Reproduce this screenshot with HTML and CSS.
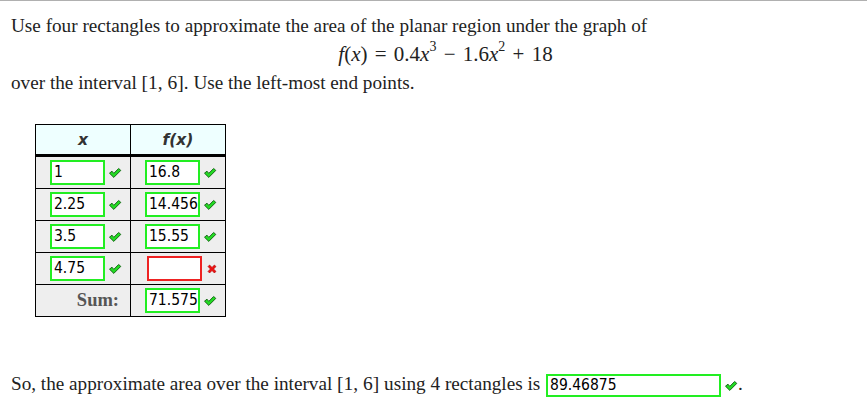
FILE: index.html
```html
<!DOCTYPE html>
<html>
<head>
<meta charset="utf-8">
<link rel="stylesheet" href="styles.css">
</head>
<body>
<div class="page">
  <p class="line first">Use four rectangles to approximate the area of the planar region under the graph of</p>
  <div class="formula"><span class="mi">f</span>(<span class="mi">x</span>) <span class="op">=</span> 0.4<span class="mi">x</span><sup>3</sup> <span class="op">−</span> 1.6<span class="mi">x</span><sup>2</sup> <span class="op">+</span> 18</div>
  <p class="line">over the interval <span class="m">[1, 6]</span>. Use the left-most end points.</p>

  <table class="grid">
    <thead>
      <tr><th>x</th><th>f(x)</th></tr>
    </thead>
    <tbody>
      <tr>
        <td><span class="field ok">1</span><svg class="mark" viewBox="0 0 14 12"><path class="chk" d="M1.5 6.2 L4 4.2 L5.8 6.4 L10.6 1.5 L12.8 3.4 L5.8 10.4 Z"/></svg></td>
        <td><span class="field ok">16.8</span><svg class="mark" viewBox="0 0 14 12"><path class="chk" d="M1.5 6.2 L4 4.2 L5.8 6.4 L10.6 1.5 L12.8 3.4 L5.8 10.4 Z"/></svg></td>
      </tr>
      <tr>
        <td><span class="field ok">2.25</span><svg class="mark" viewBox="0 0 14 12"><path class="chk" d="M1.5 6.2 L4 4.2 L5.8 6.4 L10.6 1.5 L12.8 3.4 L5.8 10.4 Z"/></svg></td>
        <td><span class="field ok">14.456</span><svg class="mark" viewBox="0 0 14 12"><path class="chk" d="M1.5 6.2 L4 4.2 L5.8 6.4 L10.6 1.5 L12.8 3.4 L5.8 10.4 Z"/></svg></td>
      </tr>
      <tr>
        <td><span class="field ok">3.5</span><svg class="mark" viewBox="0 0 14 12"><path class="chk" d="M1.5 6.2 L4 4.2 L5.8 6.4 L10.6 1.5 L12.8 3.4 L5.8 10.4 Z"/></svg></td>
        <td><span class="field ok">15.55</span><svg class="mark" viewBox="0 0 14 12"><path class="chk" d="M1.5 6.2 L4 4.2 L5.8 6.4 L10.6 1.5 L12.8 3.4 L5.8 10.4 Z"/></svg></td>
      </tr>
      <tr>
        <td><span class="field ok">4.75</span><svg class="mark" viewBox="0 0 14 12"><path class="chk" d="M1.5 6.2 L4 4.2 L5.8 6.4 L10.6 1.5 L12.8 3.4 L5.8 10.4 Z"/></svg></td>
        <td><span class="field bad"></span><svg class="mark cross" viewBox="0 0 14 12"><path class="x" d="M3 3.6 L4.6 2 L7 4.4 L9.4 2 L11 3.6 L8.6 6 L11 8.4 L9.4 10 L7 7.6 L4.6 10 L3 8.4 L5.4 6 Z"/></svg></td>
      </tr>
      <tr>
        <td class="sum">Sum:</td>
        <td><span class="field ok">71.575</span><svg class="mark" viewBox="0 0 14 12"><path class="chk" d="M1.5 6.2 L4 4.2 L5.8 6.4 L10.6 1.5 L12.8 3.4 L5.8 10.4 Z"/></svg></td>
      </tr>
    </tbody>
  </table>

  <p class="line answer">So, the approximate area over the interval <span class="m">[1, 6]</span> using 4 rectangles is <span class="field ok wide">89.46875</span><svg class="mark" viewBox="0 0 14 12"><path class="chk" d="M1.5 6.2 L4 4.2 L5.8 6.4 L10.6 1.5 L12.8 3.4 L5.8 10.4 Z"/></svg>.</p>
</div>
</body>
</html>
```
FILE: styles.css
```css
html, body {
  margin: 0;
  padding: 0;
  background: #fff;
}
body {
  border-top: 1px solid #b0b0b0;
  font-family: "Liberation Serif", "Times New Roman", serif;
  color: #222;
}
.page {
  padding: 0 11px;
}
.line {
  margin: 0;
  font-size: 19.2px;
  line-height: 28px;
}
.first {
  padding-top: 11px;
}
.formula {
  font-family: "Liberation Serif", serif;
  font-size: 21px;
  line-height: 28px;
  text-align: center;
  padding-left: 24px;
  height: 29px;
}
.formula .mi {
  font-style: italic;
}
.formula .op {
  padding: 0 2px;
}
.formula sup {
  font-size: 14px;
  line-height: 0;
  vertical-align: 10px;
}
.m {
  font-size: 19.5px;
}
.grid {
  border-collapse: collapse;
  margin: 27px 0 0 24px;
  border: 1px solid #000;
}
.grid th {
  background: #eeffff;
  font-family: "DejaVu Sans", Verdana, sans-serif;
  font-style: italic;
  font-weight: bold;
  font-size: 15.5px;
  color: #333;
  height: 29px;
  border: 1px solid #000;
  border-bottom: 3px solid #000;
  width: 94px;
  padding: 0;
}
.grid td {
  background: #eeeeee;
  border: 1px solid #000;
  height: 31px;
  padding: 0 0 0 14px;
  text-align: left;
  white-space: nowrap;
}
.grid td.sum {
  text-align: right;
  padding: 0 11px 0 0;
  font-family: "Liberation Serif", serif;
  font-weight: bold;
  font-size: 18.5px;
  color: #555;
}
.field {
  display: inline-block;
  vertical-align: middle;
  box-sizing: border-box;
  width: 55px;
  height: 25px;
  padding: 0 0 0 2px;
  background: #fff;
  font-family: "DejaVu Sans Condensed", "DejaVu Sans", sans-serif;
  font-size: 15.5px;
  line-height: 21px;
  color: #000;
  overflow: hidden;
}
.field.ok {
  border: 2px solid #22ee22;
}
.field.bad {
  border: 2px solid #ee2222;
  margin-left: 2px;
}
.field.wide {
  width: 175px;
  height: 23px;
  line-height: 19px;
  font-size: 15.5px;
  margin-left: 1px;
}
.mark {
  display: inline-block;
  vertical-align: middle;
  width: 14px;
  height: 12px;
  margin-left: 3px;
}
.chk {
  fill: #22dd22;
  stroke: #186818;
  stroke-width: 1;
  stroke-linejoin: round;
}
.x {
  fill: #ee1111;
  stroke: #aa0000;
  stroke-width: 0.6;
}
.answer {
  margin-top: 53px;
}
```
